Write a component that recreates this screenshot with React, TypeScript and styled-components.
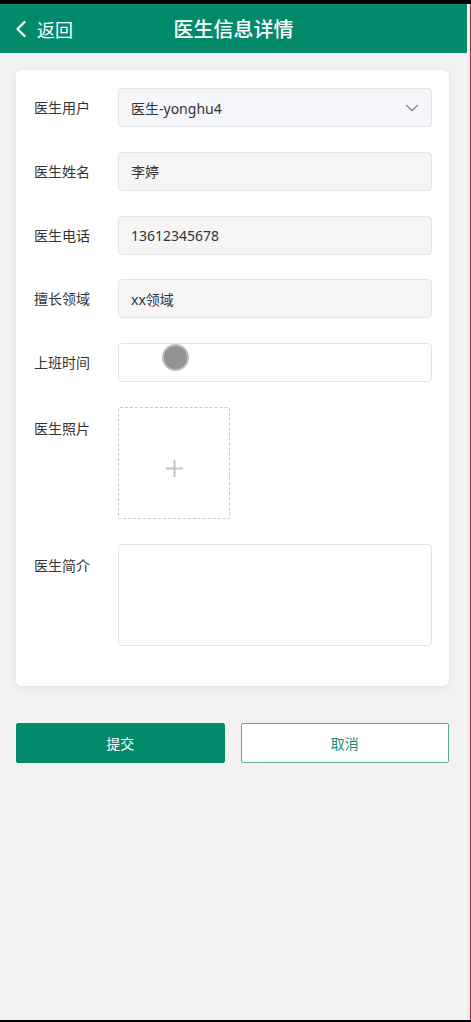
import React from "react";
import styled, { createGlobalStyle } from "styled-components";

const Global = createGlobalStyle`
  html, body { margin: 0; padding: 0; background: #000; }
  * { box-sizing: border-box; }
  body { font-family: "Noto Sans CJK SC", "Noto Sans", sans-serif; }
`;

const Screen = styled.div`
  width: 471px;
  height: 1022px;
  display: flex;
  flex-direction: column;
  background: #000;
  padding-top: 4px;
  padding-bottom: 2px;
`;

const Body = styled.div`
  flex: 1;
  display: flex;
  min-height: 0;
`;

const Main = styled.div`
  width: 467px;
  background: #f2f2f2;
  display: flex;
  flex-direction: column;
`;

const ScrollStrip = styled.div`
  width: 3px;
  background: #ececec;
`;

const Edge = styled.div`
  width: 1px;
  background: #9c3040;
`;

const Header = styled.header`
  height: 49px;
  background: #038a6a;
  display: grid;
  grid-template-columns: 90px 1fr 90px;
  align-items: center;
  color: #fff;
`;

const Back = styled.div`
  display: flex;
  align-items: center;
  gap: 10px;
  padding-left: 15px;
  font-size: 18px;
`;

const Title = styled.h1`
  margin: 0;
  text-align: center;
  font-size: 20px;
  font-weight: 500;
`;

const Card = styled.div`
  margin: 17px 18px 0 16px;
  background: #fff;
  border-radius: 6px;
  box-shadow: 0 2px 10px rgba(0, 0, 0, 0.08);
  padding: 18px 17px 15.75px 18px;
  display: flex;
  flex-direction: column;
`;

const Row = styled.div<{ $top?: boolean }>`
  display: flex;
  align-items: ${(p) => (p.$top ? "flex-start" : "center")};
  margin-bottom: 24.75px;
  position: relative;
`;

const Label = styled.label<{ $top?: boolean }>`
  width: 84px;
  flex-shrink: 0;
  font-size: 14px;
  color: #333;
  line-height: 39px;
  padding-top: ${(p) => (p.$top ? 2 : 0)}px;
`;

const Field = styled.div<{ $bg?: string; $h?: number }>`
  flex: 1;
  height: ${(p) => p.$h ?? 39}px;
  border: 1px solid #e2e4e8;
  border-radius: 4px;
  background: ${(p) => p.$bg ?? "#fff"};
  display: flex;
  align-items: center;
  justify-content: space-between;
  padding: 0 12px 0 12px;
  font-size: 14px;
  color: #333;
  font-family: "Noto Sans", "Noto Sans CJK SC", sans-serif;
`;

const Upload = styled.div`
  width: 112px;
  height: 112px;
  border: 1px dashed #c8c9cc;
  border-radius: 2px;
  display: flex;
  align-items: center;
  justify-content: center;
  padding-top: 12px;
`;

const Touch = styled.div`
  position: absolute;
  left: 128px;
  top: 1px;
  width: 27px;
  height: 27px;
  border-radius: 50%;
  background: #939393;
  border: 2px solid #bdbdbd;
`;

const Buttons = styled.div`
  margin: 37px 18px 0 16px;
  display: grid;
  grid-template-columns: 1fr 1fr;
  gap: 16px;
`;

const Button = styled.button<{ $primary?: boolean }>`
  height: 40px;
  border-radius: 2px;
  font-family: "Noto Sans CJK SC", sans-serif;
  font-size: 14px;
  border: 1px solid ${(p) => (p.$primary ? "#038a6a" : "#5fa996")};
  background: ${(p) => (p.$primary ? "#038a6a" : "#fff")};
  color: ${(p) => (p.$primary ? "#fff" : "#1d8c70")};
`;

const Chevron = () => (
  <svg width="12" height="18" viewBox="0 0 12 18">
    <path d="M9.5 2 L2.5 9 L9.5 16" fill="none" stroke="#fff" strokeWidth="2.2" strokeLinecap="round" strokeLinejoin="round" />
  </svg>
);

const Down = () => (
  <svg width="14" height="8" viewBox="0 0 14 8">
    <path d="M1.5 1.5 L7 6.5 L12.5 1.5" fill="none" stroke="#888" strokeWidth="1.3" strokeLinecap="round" />
  </svg>
);

const Plus = () => (
  <svg width="19" height="19" viewBox="0 0 19 19">
    <path d="M9.5 1 V18 M1 9.5 H18" stroke="#c0c4cc" strokeWidth="2" />
  </svg>
);

export default function App() {
  return (
    <Screen>
      <Global />
      <Body>
        <Main>
          <Header>
            <Back>
              <Chevron />
              <span>返回</span>
            </Back>
            <Title>医生信息详情</Title>
            <div />
          </Header>
          <Card>
            <Row>
              <Label>医生用户</Label>
              <Field $bg="#f4f6f9">
                <span>医生-yonghu4</span>
                <Down />
              </Field>
            </Row>
            <Row>
              <Label>医生姓名</Label>
              <Field $bg="#f5f5f5">李婷</Field>
            </Row>
            <Row>
              <Label>医生电话</Label>
              <Field $bg="#f5f5f5">13612345678</Field>
            </Row>
            <Row>
              <Label>擅长领域</Label>
              <Field $bg="#f5f5f5">xx领域</Field>
            </Row>
            <Row>
              <Label>上班时间</Label>
              <Field />
              <Touch />
            </Row>
            <Row $top>
              <Label $top>医生照片</Label>
              <Upload>
                <Plus />
              </Upload>
            </Row>
            <Row $top>
              <Label $top>医生简介</Label>
              <Field $h={102} />
            </Row>
          </Card>
          <Buttons>
            <Button $primary>提交</Button>
            <Button>取消</Button>
          </Buttons>
        </Main>
        <ScrollStrip />
        <Edge />
      </Body>
    </Screen>
  );
}
